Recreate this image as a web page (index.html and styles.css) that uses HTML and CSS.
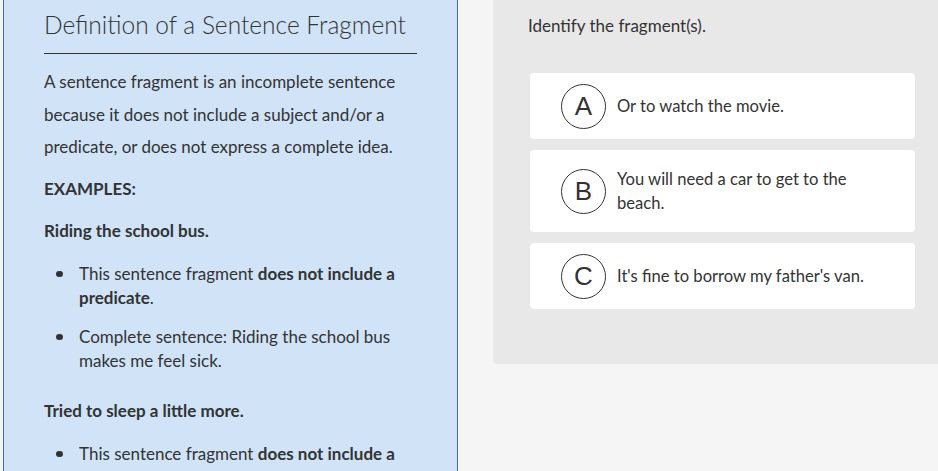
FILE: index.html
```html
<!DOCTYPE html>
<html>
<head>
	<title>Sentence Fragments</title>
	<link rel="stylesheet" href="styles.css">
</head>
<body>
	<div class="page">
		<!-- 左侧说明 -->
		<div class="lesson">
			<h2 class="lesson-title">Definition of a Sentence Fragment</h2>
			<p class="lesson-intro">A sentence fragment is an incomplete sentence because it does not include a subject and/or a predicate, or does not express a complete idea.</p>
			<p class="lesson-label">EXAMPLES:</p>
			<p class="example">Riding the school bus.</p>
			<ul class="notes">
				<li>This sentence fragment <b>does not include a predicate</b>.</li>
				<li>Complete sentence: Riding the school bus makes me feel sick.</li>
			</ul>
			<p class="example">Tried to sleep a little more.</p>
			<ul class="notes">
				<li>This sentence fragment <b>does not include a subject</b>.</li>
			</ul>
		</div>
		<!-- 右侧题目 -->
		<div class="quiz">
			<p class="question">Identify the fragment(s).</p>
			<div class="choices">
				<div class="choice">
					<span class="letter">A</span>
					<span class="choice-text">Or to watch the movie.</span>
				</div>
				<div class="choice">
					<span class="letter">B</span>
					<span class="choice-text">You will need a car to get to the beach.</span>
				</div>
				<div class="choice">
					<span class="letter">C</span>
					<span class="choice-text">It's fine to borrow my father's van.</span>
				</div>
			</div>
		</div>
	</div>
</body>
</html>
```

FILE: styles.css
```css
*{
	margin: 0;
	padding: 0;
	box-sizing: border-box;
}
html,body{
	height: 100%;
	overflow: hidden;
}
body{
	background: #f5f5f5;
	color: #333;
	font-family: Lato, "Liberation Sans", sans-serif;
	font-size: 17px;
}
.page{
	display: flex;
	align-items: flex-start;
	height: 100%;
}

.lesson{
	width: 455px;
	height: 100%;
	margin-left: 3px;
	padding: 0 40px;
	background: #d0e3f7;
	border-left: 1px solid #3d6fae;
	border-right: 1px solid #3d6fae;
	flex-shrink: 0;
}
.lesson-title{
	font-size: 24.5px;
	font-weight: 300;
	line-height: 32px;
	padding-top: 9px;
	padding-bottom: 12px;
	border-bottom: 1px solid #333;
}
.lesson-intro{
	margin-top: 12px;
	line-height: 32.5px;
}
.lesson-label{
	margin-top: 13px;
	line-height: 24px;
	font-weight: 700;
}
.example{
	margin-top: 18px;
	line-height: 24px;
	font-weight: 700;
}
.notes{
	list-style: none;
	padding-left: 35px;
	margin-top: 19px;
	line-height: 24px;
}
.notes li{
	position: relative;
}
.notes li:before{
	content: '';
	position: absolute;
	left: -23px;
	top: 9px;
	width: 6.5px;
	height: 6.5px;
	border-radius: 50%;
	background: #333;
}
.notes li + li{
	margin-top: 15px;
}
.notes + .example{
	margin-top: 26px;
}

.quiz{
	flex: 1;
	margin-left: 35px;
	padding: 14px 23px 55px 35px;
	background: #e8e8e8;
	border-radius: 0 0 0 4px;
}
.question{
	line-height: 24px;
}
.choices{
	display: flex;
	flex-direction: column;
	gap: 11px;
	margin-top: 35px;
	margin-left: 2px;
}
.choice{
	display: flex;
	align-items: center;
	gap: 11px;
	padding: 10.5px 20px 10.5px 31px;
	background: #fff;
	border-radius: 4px;
	font-size: 16.6px;
}
.letter{
	flex-shrink: 0;
	width: 45px;
	height: 45px;
	border: 1px solid #333;
	border-radius: 50%;
	display: flex;
	align-items: center;
	justify-content: center;
	font-family: "Liberation Sans", Arial, sans-serif;
	font-size: 26px;
	line-height: 1;
}
.choice-text{
	padding: 6.5px 0;
	line-height: 24px;
	max-width: 260px;
}
```
